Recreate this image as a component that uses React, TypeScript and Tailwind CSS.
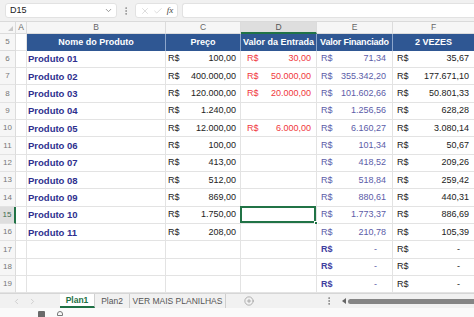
import { ChevronDown, X, Check, EllipsisVertical, CirclePlus, ChevronLeft, ChevronRight } from "lucide-react";

type Row = {
  n: number;
  name?: string;
  preco?: string;
  entrada?: string;
  fin?: string;
  vezes?: string;
  empty?: boolean;
};

const rows: Row[] = [
  { n: 6, name: "Produto 01", preco: "100,00", entrada: "30,00", fin: "71,34", vezes: "35,67" },
  { n: 7, name: "Produto 02", preco: "400.000,00", entrada: "50.000,00", fin: "355.342,20", vezes: "177.671,10" },
  { n: 8, name: "Produto 03", preco: "120.000,00", entrada: "20.000,00", fin: "101.602,66", vezes: "50.801,33" },
  { n: 9, name: "Produto 04", preco: "1.240,00", fin: "1.256,56", vezes: "628,28" },
  { n: 10, name: "Produto 05", preco: "12.000,00", entrada: "6.000,00", fin: "6.160,27", vezes: "3.080,14" },
  { n: 11, name: "Produto 06", preco: "100,00", fin: "101,34", vezes: "50,67" },
  { n: 12, name: "Produto 07", preco: "413,00", fin: "418,52", vezes: "209,26" },
  { n: 13, name: "Produto 08", preco: "512,00", fin: "518,84", vezes: "259,42" },
  { n: 14, name: "Produto 09", preco: "869,00", fin: "880,61", vezes: "440,31" },
  { n: 15, name: "Produto 10", preco: "1.750,00", fin: "1.773,37", vezes: "886,69" },
  { n: 16, name: "Produto 11", preco: "208,00", fin: "210,78", vezes: "105,39" },
  { n: 17, empty: true },
  { n: 18, empty: true },
  { n: 19, empty: true },
];

const cols = "grid grid-cols-[16px_11px_139px_75px_76px_76px_81px]";
const cell = "border-b border-r border-[#e3e3e3] h-[17.33px] flex items-center";

export default function App() {
  return (
    <div
      className="w-[474px] h-[317px] overflow-hidden bg-white text-[#222] flex flex-col"
      style={{ fontFamily: '"Liberation Sans", Arial, sans-serif' }}
    >
      {/* formula bar */}
      <div className="h-[23px] bg-[#f1f1f1] flex items-center pl-[5px] gap-[4px] border-b border-[#dadada]">
        <div className="w-[112px] h-[15px] bg-white rounded-[3px] border border-[#e2e2e2] flex items-center justify-between pl-[4px] pr-[3px]">
          <span className="text-[9px] text-[#222]">D15</span>
          <ChevronDown size={9} className="text-[#777]" strokeWidth={2} />
        </div>
        <EllipsisVertical size={10} className="text-[#888] shrink-0" />
        <div className="w-[43px] h-[15px] bg-white rounded-[3px] border border-[#e2e2e2] flex items-center justify-around px-[2px]">
          <X size={10} className="text-[#c8c8c8]" strokeWidth={1.5} />
          <Check size={10} className="text-[#c8c8c8]" strokeWidth={1.5} />
          <span className="text-[9px] italic text-[#444]" style={{ fontFamily: '"Liberation Serif", serif' }}>fx</span>
        </div>
        <div className="flex-1 h-[15px] bg-white rounded-l-[3px] border border-r-0 border-[#e2e2e2]" />
      </div>

      {/* column headers */}
      <div className={`${cols} h-[12px] bg-[#f6f6f6] text-[8.5px] text-[#666] leading-none`}>
        <div className="border-r border-b border-[#dcdcdc] relative">
          <div className="absolute right-[2px] bottom-[2px] w-0 h-0 border-l-[5px] border-l-transparent border-b-[5px] border-b-[#c9c9c9]" />
        </div>
        <div className="border-r border-b border-[#dcdcdc] flex items-center justify-center">A</div>
        <div className="border-r border-b border-[#dcdcdc] flex items-center justify-center">B</div>
        <div className="border-r border-b border-[#dcdcdc] flex items-center justify-center">C</div>
        <div className="border-r border-b-2 border-r-[#dcdcdc] border-b-[#217346] bg-[#dedede] flex items-center justify-center text-[#555]">D</div>
        <div className="border-r border-b border-[#dcdcdc] flex items-center justify-center">E</div>
        <div className="border-b border-[#dcdcdc] flex items-center justify-center">F</div>
      </div>

      {/* header row 5 */}
      <div className={`${cols} h-[17.33px] text-[9px] font-bold text-white leading-none`}>
        <div className="bg-[#f6f6f6] border-r border-b border-[#dcdcdc] flex items-center justify-center text-[8px] font-normal text-[#777]">5</div>
        <div className="border-r border-b border-[#e3e3e3]" />
        <div className="bg-[#2f5793] border-r border-[#8da6cb] flex items-center justify-center">Nome do Produto</div>
        <div className="bg-[#2f5793] border-r border-[#8da6cb] flex items-center justify-center">Preço</div>
        <div className="bg-[#2f5793] border-r border-[#8da6cb] flex items-center justify-center whitespace-nowrap">Valor da Entrada</div>
        <div className="bg-[#2f5793] border-r border-[#8da6cb] flex items-center justify-center whitespace-nowrap tracking-[-0.2px]">Valor Financiado</div>
        <div className="bg-[#2f5793] flex items-center justify-center">2 VEZES</div>
      </div>

      {/* data rows */}
      {rows.map((r) => {
        const sel = r.n === 15;
        return (
          <div key={r.n} className={`${cols} text-[9px] leading-none`}>
            <div
              className={`${cell} justify-center text-[8px] ${
                sel ? "bg-[#dedede] text-[#3d6b4f] border-r-2 border-r-[#217346]" : "bg-[#f6f6f6] text-[#777] border-r-[#dcdcdc]"
              }`}
            >
              {r.n}
            </div>
            <div className={cell} />
            <div className={`${cell} pl-[1px] font-bold text-[9.5px] text-[#2e2f8e]`}>{r.name}</div>
            <div className={`${cell} justify-between pl-[2px] pr-[4px] text-[#222]`}>
              {r.preco && (
                <>
                  <span>R$</span>
                  <span>{r.preco}</span>
                </>
              )}
            </div>
            <div className={`${cell} relative justify-between pl-[6px] pr-[5px] text-[#f0373c]`}>
              {r.entrada && (
                <>
                  <span>R$</span>
                  <span>{r.entrada}</span>
                </>
              )}
              {sel && (
                <>
                  <div className="absolute -left-[1px] -top-[1px] right-0 bottom-0 border-2 border-[#217346]" />
                  <div className="absolute -right-[2px] -bottom-[2px] w-[4px] h-[4px] bg-[#217346] border border-white" />
                </>
              )}
            </div>
            <div className={`${cell} justify-between pl-[4px] pr-[6px] text-[#5b5ca8]`}>
              {r.empty ? (
                <>
                  <span className="font-bold text-[#3f40a0]">R$</span>
                  <span className="pr-[9px]">-</span>
                </>
              ) : (
                <>
                  <span>R$</span>
                  <span>{r.fin}</span>
                </>
              )}
            </div>
            <div className={`${cell} justify-between pl-[4px] pr-[5px] text-[#222] border-r-0`}>
              {r.empty ? (
                <>
                  <span>R$</span>
                  <span className="pr-[9px]">-</span>
                </>
              ) : (
                <>
                  <span>R$</span>
                  <span>{r.vezes}</span>
                </>
              )}
            </div>
          </div>
        );
      })}

      {/* sheet tabs */}
      <div className="h-[15px] bg-[#f1f1f1] border-t border-[#d6d6d6] flex items-center text-[8.5px] leading-none">
        <div className="w-[60px] flex items-center pl-[12px] gap-[7px] text-[#c4c4c4]">
          <ChevronLeft size={9} />
          <ChevronRight size={9} />
        </div>
        <div className="h-full w-[35px] bg-white flex items-center justify-center font-bold text-[#1e7145] border-b-2 border-[#1e7145] border-r border-r-[#d0d0d0]">
          Plan1
        </div>
        <div className="h-full w-[35px] flex items-center justify-center text-[#555] border-r border-[#cfcfcf]">Plan2</div>
        <div className="h-full w-[96px] flex items-center justify-center text-[#555] border-r border-[#cfcfcf] whitespace-nowrap">
          VER MAIS PLANILHAS
        </div>
        <div className="w-[46px] flex items-center justify-center">
          <CirclePlus size={10} className="text-[#8a8a8a]" strokeWidth={1.5} />
        </div>
        <div className="w-[62px] flex items-center justify-end">
          <EllipsisVertical size={10} className="text-[#777]" />
        </div>
        <div className="flex-1 flex items-center pl-[8px] gap-[2px]">
          <div className="w-0 h-0 border-t-[3px] border-t-transparent border-b-[3px] border-b-transparent border-r-[4px] border-r-[#666]" />
          <div className="flex-1 h-[5px] rounded-l-full bg-[#858585]" />
        </div>
      </div>

      {/* status bar (cut off) */}
      <div className="flex-1 bg-[#fafafa] flex items-start pl-[38px] gap-[12px] pt-[3px]">
        <div className="w-[7px] h-[6px] bg-[#6a6a6a] rounded-t-[1px]" />
        <div className="w-[6px] h-[5px] rounded-t-full border border-[#777]" />
      </div>
    </div>
  );
}
